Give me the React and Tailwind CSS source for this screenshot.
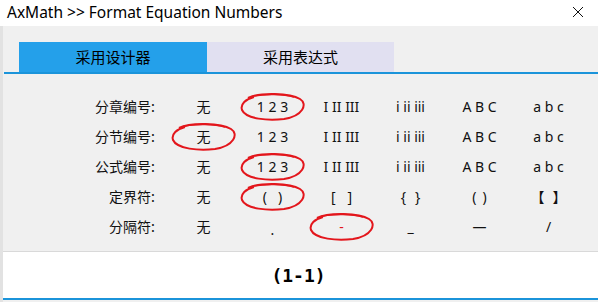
import React from 'react'

const Pair = ({ l, r, gap }) => (
  <span className="flex items-center">
    <span>{l}</span>
    <span style={{ width: gap }} />
    <span>{r}</span>
  </span>
)

const rows = [
  { label: '分章编号:', cells: ['无', '1 2 3', 'I II III', 'i ii iii', 'A B C', 'a b c'], mark: 1 },
  { label: '分节编号:', cells: ['无', '1 2 3', 'I II III', 'i ii iii', 'A B C', 'a b c'], mark: 0 },
  { label: '公式编号:', cells: ['无', '1 2 3', 'I II III', 'i ii iii', 'A B C', 'a b c'], mark: 1 },
  {
    label: '定界符:',
    cells: [
      '无',
      <Pair l="(" r=")" gap={11} />,
      <Pair l="[" r="]" gap={12} />,
      <Pair l="{" r="}" gap={9} />,
      <Pair l="(" r=")" gap={6} />,
      <Pair l="【" r="】" gap={8} />,
    ],
    mark: 1,
  },
  { label: '分隔符:', cells: ['无', '.', '-', '_', '—', '/'], mark: 2 },
]

const Circle = () => (
  <svg className="absolute left-[2px] top-[1px] pointer-events-none" width="66" height="29" viewBox="0 0 66 29">
    <path d="M8 6 C20 0 50 1 60 7 C68 12 63 24 44 27 C28 29 6 27 2 18 C0 12 6 7 14 5" fill="none" stroke="#e3161c" strokeWidth="2" />
    <path d="M12 4.5 C24 1.5 44 2 54 5" fill="none" stroke="#e3161c" strokeWidth="1.4" />
  </svg>
)

const App = () => {
  return (
    <div className="w-[598px] h-[302px] flex flex-col bg-[#f0f0f0] overflow-hidden" style={{ fontFamily: "'Noto Sans', 'Noto Sans CJK SC', sans-serif" }}>
      {/* title bar */}
      <div className="h-[26px] bg-white flex items-center justify-between pl-[7px] pr-[14px] shrink-0">
        <span className="text-[15.5px] text-black leading-none">AxMath &gt;&gt; Format Equation Numbers</span>
        <svg width="12" height="12" viewBox="0 0 12 12" className="mt-[-2px]">
          <path d="M1 1 L11 11 M11 1 L1 11" stroke="#111" strokeWidth="1" />
        </svg>
      </div>

      <div className="flex flex-1">
        <div className="w-[3px] bg-[#e2e2e2] shrink-0" />
        <div className="flex-1 flex flex-col">
          {/* tabs */}
          <div className="flex pl-[16px] pt-[16px]">
            <div className="w-[188px] h-[30px] bg-[#24a0ea] flex items-center justify-center text-[15px] text-black" style={{ fontFamily: "'Noto Sans CJK SC', sans-serif" }}>采用设计器</div>
            <div className="w-[187px] h-[30px] bg-[#e1e0f1] flex items-center justify-center text-[15px] text-black" style={{ fontFamily: "'Noto Sans CJK SC', sans-serif" }}>采用表达式</div>
          </div>
          <div className="h-[2px] bg-[#1b94da] ml-[1px]" />

          {/* option grid */}
          <div className="flex flex-col pt-[17px] pb-[10px]">
            {rows.map((r, ri) => (
              <div key={ri} className="flex h-[30px] items-center">
                <div className="w-[152px] text-right text-[14px] text-[#111]" style={{ fontFamily: "'Noto Sans CJK SC', sans-serif" }}>{r.label}</div>
                <div className="w-[14px]" />
                {r.cells.map((c, ci) => (
                  <div key={ci} className="relative w-[69px] h-[30px] flex items-center justify-center text-[14px] text-[#111] whitespace-pre">
                    {ri === 4 && ci === 2 ? <span className="text-[#e3161c]">-</span> : <span className={ri === 4 && ci === 1 ? 'mt-[6px]' : ''}>{c}</span>}
                    {ci === r.mark && <Circle />}
                  </div>
                ))}
              </div>
            ))}
          </div>

          {/* preview */}
          <div className="h-[1px] bg-[#d9d9d9]" />
          <div className="h-[46px] bg-white flex items-center justify-center pr-[4px]">
            <span className="text-[18px] font-bold text-black" style={{ fontFamily: "'DejaVu Sans Mono', monospace" }}>(1-1)</span>
          </div>
          <div className="h-[2px] bg-[#1b94da]" />
        </div>
      </div>
    </div>
  )
}

export default App
